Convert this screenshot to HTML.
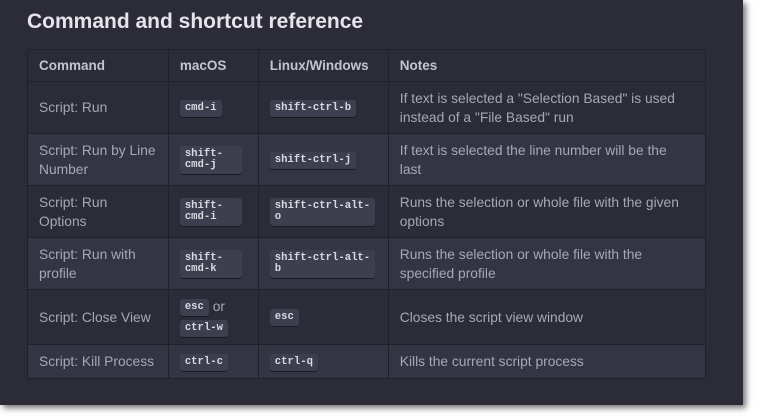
<!DOCTYPE html>
<html><head><style>
body{margin:0;width:757px;height:420px;background:#fff;position:relative;overflow:hidden;font-family:"Liberation Sans",sans-serif}
.panel{position:absolute;left:0;top:0;width:743px;height:405px;background:#2b2c38;box-shadow:3px 3px 6px rgba(0,0,0,.55)}
h1{position:absolute;left:27px;top:10px;margin:0;font-size:21px;font-weight:bold;color:#e4e4ea;letter-spacing:0px}
table{position:absolute;left:27px;top:49px;border-collapse:collapse;width:679px;font-size:13.8px;color:#a7a8b4}
td,th{border:1px solid #20212a;padding:0 11px;text-align:left;vertical-align:middle;line-height:19px}
td.n{padding-right:24px}
th{height:31px;color:#c4c5cc;font-weight:bold;font-size:13.5px}
tr.a td{background:#333542}
kbd{display:inline-block;font-family:"Liberation Mono",monospace;font-size:10.6px;font-weight:bold;line-height:11px;background:#3d3f4f;color:#d8d9e0;padding:3px 5px;border-radius:3px;box-shadow:0 1px 0 #1a1b22;vertical-align:middle}
</style></head><body>
<div class="panel">
<h1>Command and shortcut reference</h1>
<table>
<colgroup><col style="width:141px"><col style="width:90px"><col style="width:130px"><col style="width:318px"></colgroup>
<tr><th>Command</th><th>macOS</th><th>Linux/Windows</th><th>Notes</th></tr>
<tr style="height:52px"><td>Script: Run</td><td><kbd>cmd-i</kbd></td><td><kbd>shift-ctrl-b</kbd></td><td class="n">If text is selected a "Selection Based" is used instead of a "File Based" run</td></tr>
<tr class="a" style="height:52px"><td>Script: Run by Line Number</td><td><kbd style="width:52px">shift-<br>cmd-j</kbd></td><td><kbd>shift-ctrl-j</kbd></td><td class="n">If text is selected the line number will be the last</td></tr>
<tr style="height:52px"><td>Script: Run Options</td><td><kbd style="width:52px">shift-<br>cmd-i</kbd></td><td><kbd>shift-ctrl-alt-<br>o</kbd></td><td class="n">Runs the selection or whole file with the given options</td></tr>
<tr class="a" style="height:52px"><td>Script: Run with profile</td><td><kbd style="width:52px">shift-<br>cmd-k</kbd></td><td><kbd>shift-ctrl-alt-<br>b</kbd></td><td class="n">Runs the selection or whole file with the specified profile</td></tr>
<tr style="height:55px"><td>Script: Close View</td><td><kbd>esc</kbd> or<br><kbd style="margin-top:4px">ctrl-w</kbd></td><td><kbd>esc</kbd></td><td class="n">Closes the script view window</td></tr>
<tr class="a" style="height:34px"><td>Script: Kill Process</td><td><kbd>ctrl-c</kbd></td><td><kbd>ctrl-q</kbd></td><td class="n">Kills the current script process</td></tr>
</table>
</div>
</body></html>
